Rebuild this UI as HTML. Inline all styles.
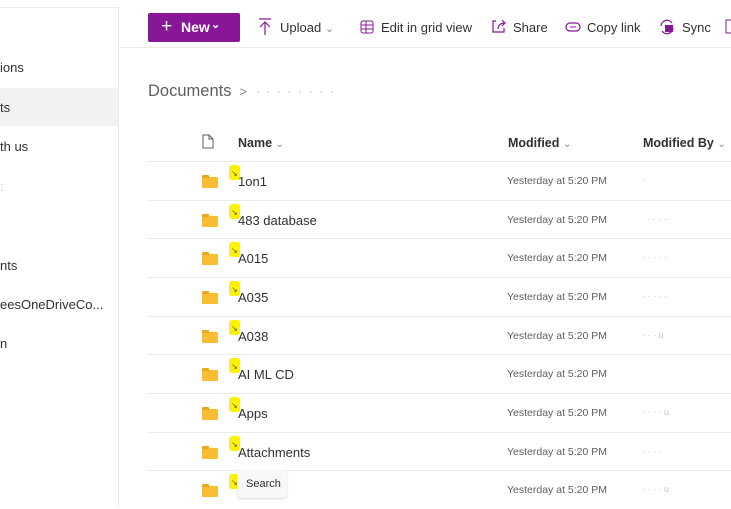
<!DOCTYPE html>
<html><head><meta charset="utf-8"><style>
*{margin:0;padding:0;box-sizing:border-box}
body{width:731px;height:500px;overflow:hidden;background:#fff;font-family:"Liberation Sans",sans-serif;color:#323130;position:relative}
.abs{position:absolute;white-space:nowrap}
.side{position:absolute;left:0;top:7px;width:119px;height:500px;border-top:1px solid #edebe9;border-right:1px solid #edebe9}
.si{position:absolute;left:0;font-size:13px;color:#323130}
.tb{position:absolute;left:119px;top:47px;width:612px;border-top:1px solid #edebe9}
.new{position:absolute;left:148px;top:13px;width:92px;height:29px;background:#881798;border-radius:2px;color:#fff;font-weight:bold;font-size:14px}
.tbt{font-size:13px;color:#323130;top:20px}
.hdr{font-size:12.5px;font-weight:bold;color:#323130;top:136px}
.row{position:absolute;left:148px;width:583px;height:39px;border-top:1px solid #edebe9}
.fold{position:absolute;left:54px;top:15px;width:16px;height:11px;background:#f8bd33;border-radius:1px}
.fold:before{content:"";position:absolute;left:0;top:-2px;width:7px;height:3px;background:#e8a820;border-radius:1px 1px 0 0}
.hl{position:absolute;left:81px;top:3px;width:11px;height:15px;background:#fff200;border-radius:3px;font-size:8px;color:#555;line-height:18px;text-align:center}
.nm{position:absolute;left:90px;top:12px;font-size:13px;color:#323130}
.dt{position:absolute;left:359px;top:13px;font-size:10.5px;color:#605e5c}
.mb{position:absolute;left:494px;top:13px;font-size:9px;color:#c8c6c4}
</style></head><body>
<div class="side"></div>
<div class="abs" style="left:0;top:88px;width:118px;height:38px;background:#f3f2f1"></div>
<div class="si abs" style="top:60px">ions</div>
<div class="si abs" style="top:100px">ts</div>
<div class="si abs" style="top:139px">th us</div>
<div class="si abs" style="top:179px;color:#c8c6c4">:</div>
<div class="si abs" style="top:258px">nts</div>
<div class="si abs" style="top:297px">eesOneDriveCo...</div>
<div class="si abs" style="top:336px">n</div>
<div class="tb"></div>
<div class="new"><span class="abs" style="left:13px;top:3px;font-size:19px;font-weight:normal">+</span><span class="abs" style="left:33px;top:6px">New</span><span class="abs" style="left:63px;top:5px;font-size:11px">&#8964;</span></div>
<svg class="abs" style="left:258px;top:18px" width="14" height="18"><path d="M1 1h12M7 4v13M2 9l5-5 5 5" stroke="#881798" fill="none" stroke-width="1.2"/></svg>
<div class="abs tbt" style="left:280px">Upload <span style="color:#8a8886;font-size:11px">&#8964;</span></div>
<svg class="abs" style="left:360px;top:20px" width="14" height="14"><rect x="1" y="1" width="12" height="12" rx="2" stroke="#881798" fill="none"/><path d="M1 5h12M1 9h12M6 1v12" stroke="#881798"/></svg>
<div class="abs tbt" style="left:381px">Edit in grid view</div>
<svg class="abs" style="left:491px;top:19px" width="15" height="15"><path d="M5 2H2v11h11v-4M7 10c0-4 3-6 7-6M11 1l3 3-3 3" stroke="#881798" fill="none" stroke-width="1.2"/></svg>
<div class="abs tbt" style="left:513px">Share</div>
<svg class="abs" style="left:565px;top:22px" width="16" height="10"><rect x="1" y="1" width="14" height="8" rx="4" stroke="#881798" fill="none" stroke-width="1.2"/><path d="M5 5h6" stroke="#881798"/></svg>
<div class="abs tbt" style="left:587px">Copy link</div>
<svg class="abs" style="left:659px;top:18px" width="16" height="18"><path d="M2 8a6 6 0 0 1 11-3M14 10a6 6 0 0 1-11 3" stroke="#881798" fill="none" stroke-width="1.3"/><rect x="6" y="7" width="8" height="7" fill="#881798"/></svg>
<div class="abs tbt" style="left:682px">Sync</div>
<svg class="abs" style="left:725px;top:19px" width="6" height="15"><rect x="1" y="1" width="8" height="13" stroke="#881798" fill="none"/></svg>
<div class="abs" style="left:148px;top:82px;font-size:16.5px;color:#605e5c">Documents <span style="font-size:13px;color:#8a8886">&nbsp;&gt;&nbsp;</span> <span style="color:#c8c6c4;font-size:14px;letter-spacing:1px">· · · · · · · ·</span></div>
<svg class="abs" style="left:202px;top:134px" width="12" height="15"><path d="M1 1h6l4 4v9H1z M7 1v4h4" stroke="#605e5c" fill="none"/></svg>
<div class="abs hdr" style="left:238px">Name <span style="font-weight:normal;color:#8a8886;font-size:10px">&#8964;</span></div>
<div class="abs hdr" style="left:508px">Modified <span style="font-weight:normal;color:#8a8886;font-size:10px">&#8964;</span></div>
<div class="abs hdr" style="left:643px">Modified By <span style="font-weight:normal;color:#8a8886;font-size:10px">&#8964;</span></div>
<div class="row" style="top:161px"><div class="fold"></div><div class="hl">↘</div><div class="nm">1on1</div><div class="dt">Yesterday at 5:20 PM</div><div class="mb">·</div></div>
<div class="row" style="top:200px"><div class="fold"></div><div class="hl">↘</div><div class="nm">483 database</div><div class="dt">Yesterday at 5:20 PM</div><div class="mb">&nbsp;&nbsp;· · · ··</div></div>
<div class="row" style="top:238px"><div class="fold"></div><div class="hl">↘</div><div class="nm">A015</div><div class="dt">Yesterday at 5:20 PM</div><div class="mb">· · · · ·</div></div>
<div class="row" style="top:277px"><div class="fold"></div><div class="hl">↘</div><div class="nm">A035</div><div class="dt">Yesterday at 5:20 PM</div><div class="mb">· · · · ·</div></div>
<div class="row" style="top:316px"><div class="fold"></div><div class="hl">↘</div><div class="nm">A038</div><div class="dt">Yesterday at 5:20 PM</div><div class="mb">· · · u</div></div>
<div class="row" style="top:354px"><div class="fold"></div><div class="hl">↘</div><div class="nm">AI ML CD</div><div class="dt">Yesterday at 5:20 PM</div></div>
<div class="row" style="top:393px"><div class="fold"></div><div class="hl">↘</div><div class="nm">Apps</div><div class="dt">Yesterday at 5:20 PM</div><div class="mb">· · · · u</div></div>
<div class="row" style="top:432px"><div class="fold"></div><div class="hl">↘</div><div class="nm">Attachments</div><div class="dt">Yesterday at 5:20 PM</div><div class="mb">· · · ·</div></div>
<div class="row" style="top:470px"><div class="fold"></div><div class="hl">↘</div><div class="dt">Yesterday at 5:20 PM</div><div class="mb">· · · · u</div></div>
<div class="abs" style="left:237px;top:470px;width:50px;height:28px;background:#f8f8f8;border-radius:4px;box-shadow:0 1px 2px rgba(0,0,0,.15);font-size:11px;color:#323130;padding:8px 0 0 9px">Search</div>
</body></html>
